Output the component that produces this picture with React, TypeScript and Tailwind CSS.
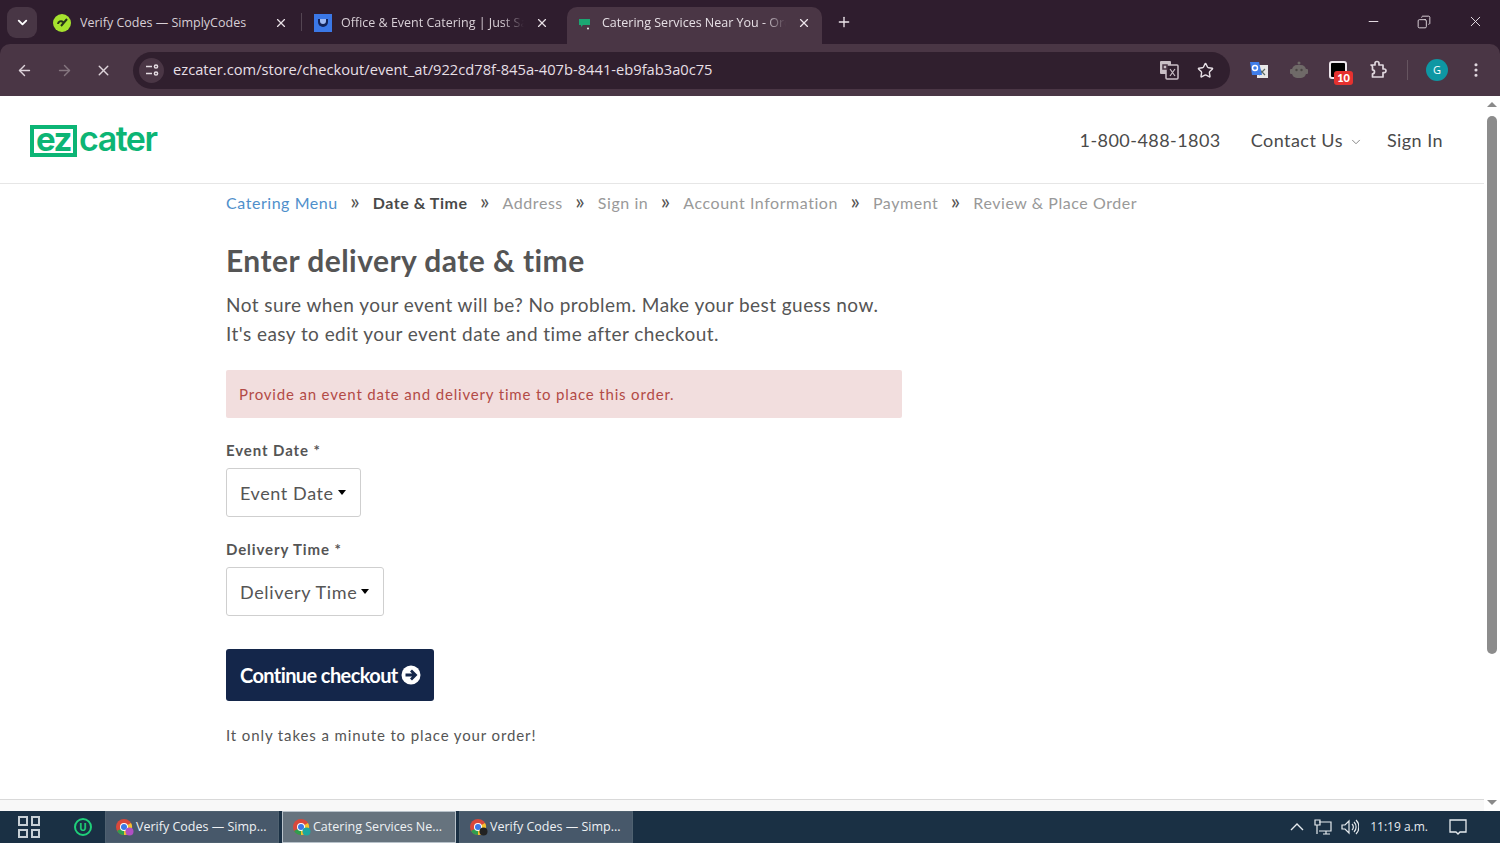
import React from 'react';
import { ArrowLeft, ArrowRight, ChevronDown, Copy, EllipsisVertical, Minus, Plus, Star, X } from 'lucide-react';

const ChromeLogo = ({ badge }: { badge: string }) => (
  <svg width="20" height="20" viewBox="0 0 20 20" className="shrink-0">
    <circle cx="9" cy="10" r="8" fill="#d9483b" />
    <path d="M9 10 L2 14 A8 8 0 0 0 9 18 Z" fill="#2f9e4f" />
    <path d="M9 10 L9 18 A8 8 0 0 0 16 6 Z" fill="#f2c230" />
    <circle cx="9" cy="10" r="4" fill="#fff" />
    <circle cx="9" cy="10" r="3" fill="#3b78e7" />
    <circle cx="14.5" cy="14.5" r="4" fill={badge} />
  </svg>
);

const Tab = ({ title, icon, fade }: { title: string; icon: React.ReactNode; fade?: boolean }) => (
  <div className="flex h-[37px] items-center pb-[5px] pl-[13px]">
    <div className="flex w-[27px] shrink-0 items-center">{icon}</div>
    <span
      className={`w-[183px] overflow-hidden whitespace-nowrap text-[12.5px] text-[#d8cfd6] ${fade ? '[mask-image:linear-gradient(to_right,black_88%,transparent)]' : ''}`}
    >
      {title}
    </span>
    <X size={14} strokeWidth={2} className="ml-[11px] shrink-0 text-[#e8e0e6]" />
  </div>
);

const Crumb = ({ label, tone }: { label: string; tone: string }) => (
  <span className={`whitespace-nowrap ${tone}`}>{label}</span>
);

const Sep = () => <span className="mx-[12.5px] pb-[3px] text-[22px] leading-none text-[#555]">»</span>;

const TaskButton = ({ title, badge, active }: { title: string; badge: string; active?: boolean }) => (
  <div
    className={`flex h-[32px] w-[174px] items-center gap-[1px] border pl-[9px] text-[12.5px] text-[#eef1f4] ${active ? 'border-[#b8c2ca] bg-[#66737e]' : 'border-[#4f6170] bg-[#47586a]'}`}
  >
    <ChromeLogo badge={badge} />
    <span className="whitespace-nowrap">{title}</span>
  </div>
);

export default function App() {
  return (
    <div className="flex h-[843px] w-[1500px] flex-col overflow-hidden bg-[#2f1d2e] font-['Lato',sans-serif]">
      {/* browser tabs */}
      <div className="flex h-[44px] shrink-0 items-end bg-[#2f1d2e] font-['Open_Sans',sans-serif]">
        <div className="mb-[6px] ml-[7px] mr-[3px] flex h-[31px] w-[30px] items-center justify-center rounded-[9px] bg-[#483645]">
          <ChevronDown size={15} strokeWidth={3} className="text-white" />
        </div>
        <div className="flex w-[261px] shrink-0">
          <Tab
            title="Verify Codes — SimplyCodes"
            icon={
              <svg width="18" height="18" viewBox="0 0 18 18">
                <circle cx="9" cy="9" r="9" fill="#a6e22e" />
                <path d="M5 10a3 3 0 0 1 5-2M8 12l6-7" stroke="#26331a" strokeWidth="2" fill="none" />
              </svg>
            }
          />
        </div>
        <div className="mb-[13px] h-[18px] w-px bg-[#544552]" />
        <div className="-ml-px flex w-[261px] shrink-0">
          <Tab
            title="Office & Event Catering | Just Sa"
            fade
            icon={
              <svg width="18" height="18" viewBox="0 0 18 18">
                <rect width="18" height="18" fill="#3b78e7" />
                <path d="M4 5h10v3a5 5 0 0 1-10 0Z" fill="#12235a" />
                <path d="M6 5h6v2a3 3 0 0 1-6 0Z" fill="#9db8f2" />
              </svg>
            }
          />
        </div>
        <div className="ml-[5px] h-[37px] w-[255px] rounded-t-[10px] bg-[#4a3645]">
          <div className="flex h-full items-center pb-[5px] pl-[11px]">
            <div className="flex w-[24px] shrink-0 items-center">
              <svg width="14" height="14" viewBox="0 0 14 14">
                <path d="M1 3h11v6H5l-2 2v-2H1Z" fill="#1ba672" />
                <circle cx="10" cy="12.5" r="1" fill="#f0f0f0" />
              </svg>
            </div>
            <span className="w-[184px] overflow-hidden whitespace-nowrap text-[12.5px] text-[#e6dfe5] [mask-image:linear-gradient(to_right,black_88%,transparent)]">
              Catering Services Near You - Order
            </span>
            <X size={14} strokeWidth={2} className="ml-[11px] shrink-0 text-[#eee6ec]" />
          </div>
        </div>
        <Plus size={16} strokeWidth={2} className="mb-[14px] ml-[14px] text-[#eee6ec]" />
        <div className="mb-[14px] ml-auto flex items-center gap-[36px] pr-[16px] text-[#eee6ec]">
          <Minus size={15} strokeWidth={1.5} />
          <Copy size={14} strokeWidth={1.5} className="-scale-x-100" />
          <X size={17} strokeWidth={1.3} />
        </div>
      </div>

      {/* browser toolbar */}
      <div className="flex h-[52px] shrink-0 items-center rounded-t-[10px] bg-[#4a3645] pl-[16px] font-['Open_Sans',sans-serif]">
        <ArrowLeft size={17} strokeWidth={2} className="text-[#ddd3da]" />
        <ArrowRight size={17} strokeWidth={2} className="ml-[23px] text-[#85767f]" />
        <X size={17} strokeWidth={2} className="ml-[22px] text-[#ddd3da]" />
        <div className="ml-[21px] flex h-[37px] w-[1097px] shrink-0 items-center rounded-full bg-[#301f2e] pl-[6px] pr-[16px]">
          <div className="flex h-[25px] w-[25px] items-center justify-center rounded-full bg-[#4a3645]">
            <svg width="16" height="16" viewBox="0 0 16 16" fill="none" stroke="#e4dce2" strokeWidth="1.5">
              <path d="M2 4.5h6M2 11.5h6" />
              <circle cx="12" cy="4.5" r="1.6" />
              <circle cx="12" cy="11.5" r="1.6" />
            </svg>
          </div>
          <span className="ml-[9px] pb-[2px] text-[14.7px] text-[#e6dfe5]">ezcater.com/store/checkout/event_at/922cd78f-845a-407b-8441-eb9fab3a0c75</span>
          <div className="ml-auto flex items-center gap-[18px]">
            <svg width="20" height="20" viewBox="0 0 20 20">
              <rect x="1" y="1" width="11" height="13" rx="1" fill="#c9bfc6" />
              <rect x="7" y="5" width="12" height="14" rx="1" fill="#301f2e" stroke="#c9bfc6" strokeWidth="1.5" />
              <path d="M4 5h4v4H4Z" fill="none" stroke="#4a3645" strokeWidth="1.5" />
              <path d="M11 9l5 7M16 9l-5 7" stroke="#c9bfc6" strokeWidth="1.2" />
            </svg>
            <Star size={17} strokeWidth={2} className="text-[#e6dfe5]" />
          </div>
        </div>
        <div className="ml-[19px] flex shrink-0 items-center">
          <svg width="20" height="20" viewBox="0 0 20 20">
            <rect x="8" y="5" width="11" height="13" fill="#e8e8e8" />
            <path d="M10 9l6 6M16 9l-6 6" stroke="#5b6b63" strokeWidth="1.2" />
            <path d="M1 2h9l3 13H3Z" fill="#3f7de8" />
            <circle cx="6" cy="8" r="2.5" fill="none" stroke="#fff" strokeWidth="1.4" />
          </svg>
          <svg width="20" height="20" viewBox="0 0 20 20" className="ml-[20px]">
            <circle cx="10" cy="3" r="1.5" fill="#6f6a68" />
            <rect x="3" y="5" width="14" height="13" rx="5" fill="#6f6a68" />
            <rect x="1" y="9" width="3" height="5" rx="1" fill="#6f6a68" />
            <rect x="16" y="9" width="3" height="5" rx="1" fill="#6f6a68" />
            <circle cx="7.5" cy="10" r="1.2" fill="#4a4644" />
            <circle cx="12.5" cy="10" r="1.2" fill="#4a4644" />
          </svg>
          <div className="relative ml-[20px] h-[18px] w-[18px] rounded-[3px] border-2 border-[#eee6ec] bg-black">
            <span className="absolute -bottom-[8px] -right-[8px] rounded-[3px] bg-[#e5312f] px-[3px] font-['Lato',sans-serif] text-[11px] font-black leading-[14px] text-white">10</span>
          </div>
          <svg width="20" height="20" viewBox="0 0 20 20" fill="none" stroke="#e0d7de" strokeWidth="1.7" strokeLinejoin="round" className="ml-[21px]">
            <path d="M3 5h4V3.5a2 2 0 0 1 4 0V5h4v4h1.2a1.8 1.8 0 0 1 0 3.6H15V17H4.5v-3.2a2 2 0 0 0 0-4V7a2 2 0 0 0-1.5-2Z" />
          </svg>
          <div className="ml-[19px] h-[20px] w-px bg-[#665560]" />
          <div className="ml-[18px] flex h-[22px] w-[22px] items-center justify-center rounded-full bg-[#0e97a3] text-[11px] text-white">G</div>
          <EllipsisVertical size={18} strokeWidth={2.2} className="ml-[19px] text-[#e0d7de]" />
        </div>
      </div>

      {/* page and its scrollbar */}
      <div className="flex min-h-0 flex-1 bg-white">
        <div className="flex min-w-0 flex-1 flex-col text-[#555]">
          <header className="flex h-[88px] shrink-0 items-center justify-between border-b border-[#e6e6e6] pl-[30px] pr-[41px] pt-[2px] text-[#4a4a4a]">
            <div className="flex items-center text-[#0cb575]">
              <span className="flex h-[32px] w-[47px] items-center justify-center border-[4px] border-[#0cb575] pb-[3px] font-['Inter',sans-serif] text-[33px] font-bold leading-none tracking-[-1.5px]">
                ez
              </span>
              <span className="ml-[2px] pb-[3px] font-['Inter',sans-serif] text-[34px] font-semibold leading-none tracking-[-1.5px]">cater</span>
            </div>
            <div className="flex items-center text-[18px] tracking-[0.45px]">
              <span>1-800-488-1803</span>
              <span className="ml-[30px]">Contact Us</span>
              <ChevronDown size={14} strokeWidth={1.5} className="ml-[6px] mt-[3px] text-[#777]" />
              <span className="ml-[24px]">Sign In</span>
            </div>
          </header>

          <main className="flex flex-1 flex-col items-start pl-[226px]">
            <nav className="mt-[7px] flex h-[23px] items-center text-[16px] tracking-[0.55px]">
              <Crumb label="Catering Menu" tone="text-[#4f8fcb]" />
              <Sep />
              <Crumb label="Date & Time" tone="font-bold text-[#4a4a4a]" />
              <Sep />
              <Crumb label="Address" tone="text-[#999]" />
              <Sep />
              <Crumb label="Sign in" tone="text-[#999]" />
              <Sep />
              <Crumb label="Account Information" tone="text-[#999]" />
              <Sep />
              <Crumb label="Payment" tone="text-[#999]" />
              <Sep />
              <Crumb label="Review & Place Order" tone="text-[#999]" />
            </nav>

            <h1 className="mt-[27px] text-[30px] font-bold leading-[38px] tracking-[0.45px] text-[#555]">Enter delivery date & time</h1>
            <p className="mt-[11px] text-[19px] leading-[29px] tracking-[0.45px] text-[#555]">
              Not sure when your event will be? No problem. Make your best guess now.
              <br />
              It's easy to edit your event date and time after checkout.
            </p>

            <div className="mt-[22px] flex h-[48px] w-[676px] items-center rounded-[2px] bg-[#f2dede] pl-[13px] text-[15px] tracking-[0.83px] text-[#b24a46]">
              Provide an event date and delivery time to place this order.
            </div>

            <label className="mt-[21px] text-[15px] font-bold leading-[22px] tracking-[0.9px]">Event Date *</label>
            <button className="mt-[7px] flex h-[49px] items-center rounded-[3px] border border-[#cfcfcf] bg-white pl-[13px] pr-[14px] pt-[2px] text-[18px] tracking-[0.6px] text-[#555]">
              Event Date
              <span className="ml-[4px] mt-[-2px] border-x-[4.5px] border-t-[5px] border-x-transparent border-t-black" />
            </button>

            <label className="mt-[21px] text-[15px] font-bold leading-[22px] tracking-[0.9px]">Delivery Time *</label>
            <button className="mt-[7px] flex h-[49px] items-center rounded-[3px] border border-[#cfcfcf] bg-white pl-[13px] pr-[14px] pt-[2px] text-[18px] tracking-[0.65px] text-[#555]">
              Delivery Time
              <span className="ml-[4px] mt-[-2px] border-x-[4.5px] border-t-[5px] border-x-transparent border-t-black" />
            </button>

            <button className="mt-[33px] flex h-[52px] w-[208px] items-center rounded-[3px] bg-[#14264a] pl-[14px] text-[20px] font-bold tracking-[-0.6px] text-white">
              Continue checkout
              <svg width="20" height="20" viewBox="0 0 20 20" className="ml-[3px]">
                <circle cx="10" cy="10" r="9.5" fill="#fff" />
                <path d="M4.5 10h9M10 5.5l4.5 4.5-4.5 4.5" stroke="#14264a" strokeWidth="2.8" fill="none" />
              </svg>
            </button>

            <p className="mt-[23px] text-[15px] leading-[22px] tracking-[0.88px] text-[#555]">It only takes a minute to place your order!</p>
          </main>
          <div className="h-[12px] shrink-0 border-t border-[#d9d9d9] bg-[#f8f8f8]" />
        </div>

        <div className="flex w-[16px] shrink-0 flex-col items-center bg-white pt-[6px]">
          <div className="h-0 w-0 border-x-[5px] border-b-[5px] border-x-transparent border-b-[#8a8a8a]" />
          <div className="mt-[9px] h-[538px] w-[10px] rounded-full bg-[#8c8c8c]" />
          <div className="mb-[6px] mt-auto h-0 w-0 border-x-[5px] border-t-[5px] border-x-transparent border-t-[#8a8a8a]" />
        </div>
      </div>

      {/* windows taskbar */}
      <div className="flex h-[32px] shrink-0 items-center bg-[#1a3044] font-['Open_Sans',sans-serif]">
        <div className="ml-[18px] grid h-[22px] w-[22px] grid-cols-2 gap-[3px]">
          <div className="border-2 border-[#c8d0d6]" />
          <div className="border-2 border-[#c8d0d6]" />
          <div className="border-2 border-[#c8d0d6]" />
          <div className="border-2 border-[#c8d0d6]" />
        </div>
        <div className="ml-[34px] flex h-[18px] w-[18px] items-center justify-center rounded-full border-2 border-[#1fd07a] text-[10px] font-bold text-[#1fd07a]">U</div>
        <div className="ml-[13px] flex gap-[3px]">
          <TaskButton title="Verify Codes — Simp..." badge="#b04fc4" />
          <TaskButton title="Catering Services Ne..." badge="#1ba7a0" active />
          <TaskButton title="Verify Codes — Simp..." badge="#222" />
        </div>
        <div className="ml-auto flex items-center pr-[33px] text-[#e6ebef]">
          <svg width="14" height="8" viewBox="0 0 14 8" fill="none" stroke="currentColor" strokeWidth="1.4">
            <path d="M1 7l6-6 6 6" />
          </svg>
          <svg width="18" height="16" viewBox="0 0 18 16" fill="none" stroke="currentColor" strokeWidth="1.2" className="ml-[10px]">
            <path d="M5 3h12v9H5M9 15h7M12 12v3M1 1h5v5H1ZM3 6v9" />
          </svg>
          <svg width="18" height="16" viewBox="0 0 18 16" fill="none" stroke="currentColor" strokeWidth="1.2" className="ml-[9px]">
            <path d="M1 6v4h3l4 4V2L4 6ZM11 5a4 4 0 0 1 0 6M13 3a7 7 0 0 1 0 10M15 1a10 10 0 0 1 0 14" />
          </svg>
          <span className="ml-[11px] text-[12px]">11:19 a.m.</span>
          <svg width="18" height="16" viewBox="0 0 18 16" fill="none" stroke="currentColor" strokeWidth="1.3" className="ml-[21px]">
            <path d="M1 1h16v12h-6l-2 2-2-2H1Z" />
          </svg>
        </div>
      </div>
    </div>
  );
}
